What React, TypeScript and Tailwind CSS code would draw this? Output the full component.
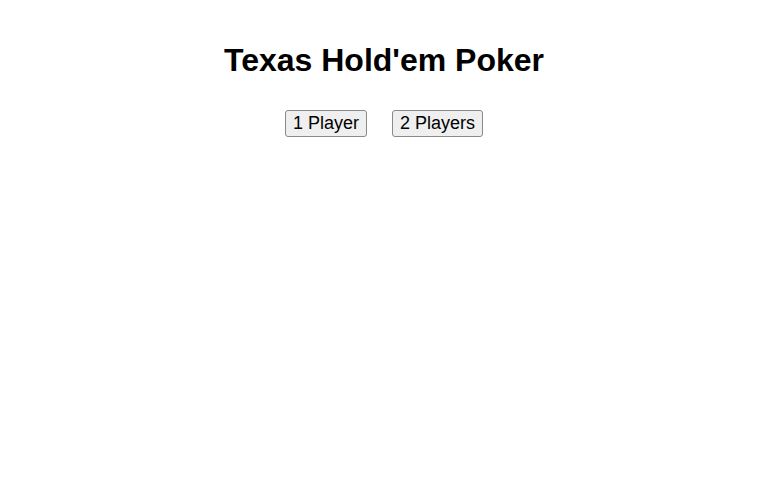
import React from 'react';

export default function App() {
  const modes = ['1 Player', '2 Players'];

  return (
    <div className="min-h-screen bg-white text-black font-['Liberation_Sans',Arial,sans-serif] flex flex-col items-center pt-[42px]">
      <h1 className="text-[32px] leading-[37px] font-bold">Texas Hold'em Poker</h1>

      {/* Player count selection */}
      <div className="flex gap-[25px] mt-[31px]">
        {modes.map((m) => (
          <button
            key={m}
            className="text-[18px] leading-[21px] px-[7px] py-[2px] bg-[#efefef] border border-[#8a8a8a] rounded-[3px] text-black"
          >
            {m}
          </button>
        ))}
      </div>
    </div>
  );
}
